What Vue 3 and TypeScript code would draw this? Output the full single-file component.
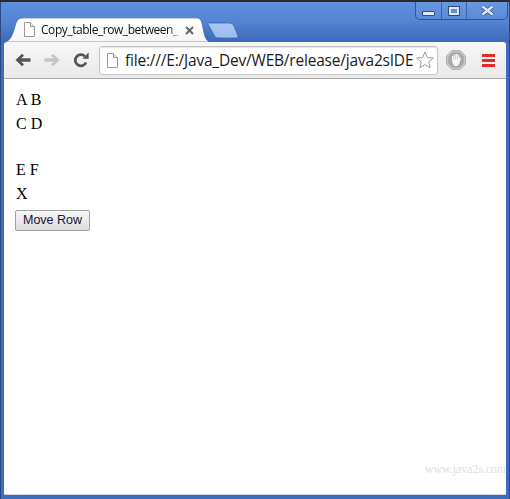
<script setup lang="ts">
const rows: string[][] = [['A B'], ['C D']]
const rows2: string[][] = [['E F'], ['X']]
</script>

<template>
  <div class="window">
    <header class="titlebar">
      <svg class="tab-shape" width="236" height="24" viewBox="0 0 236 24">
        <defs>
          <linearGradient id="tabfill" x1="0" y1="0" x2="0" y2="1">
            <stop offset="0" stop-color="#ffffff" />
            <stop offset="1" stop-color="#f6f6f6" />
          </linearGradient>
          <linearGradient id="newfill" x1="0" y1="0" x2="0" y2="1">
            <stop offset="0" stop-color="#a9c8f2" />
            <stop offset="1" stop-color="#9abcec" />
          </linearGradient>
        </defs>
        <path d="M0 24 C4 23 6 20 8 15 L11 5 C12 2 14 0 18 0 L192 0 C195 0 196 2 197 5 L199 15 C200 20 202 23 205 24 Z" fill="url(#tabfill)" stroke="#2f5ba6" stroke-width="0.6" />
        <path d="M203 6 C203 5 204 5 205 5 L224 5 C227 5 228 6 229 8 L233 18 C233 20 232 20 230 20 L213 20 C211 20 210 19 209 17 Z" fill="url(#newfill)" stroke="#3a66b0" stroke-width="0.8" />
      </svg>
      <div class="tab">
        <svg class="page-icon" width="12" height="15" viewBox="0 0 12 15">
          <path d="M1.5 .5 H7.5 L11.5 4.5 V14.5 H1.5 Z" fill="#fff" stroke="#9a9a9a" />
          <path d="M7.5 .5 V4.5 H11.5" fill="#eee" stroke="#9a9a9a" />
        </svg>
        <span class="tab-title">Copy_table_row_between_</span>
        <svg class="tab-close" width="9" height="9" viewBox="0 0 9 9">
          <path d="M1 1 L8 8 M8 1 L1 8" stroke="#666" stroke-width="2" />
        </svg>
      </div>
      <div class="controls">
        <div class="ctl ctl-min"><i class="min-glyph"></i></div>
        <div class="ctl ctl-max"><i class="max-glyph"></i></div>
        <div class="ctl ctl-close">
          <svg width="15" height="11" viewBox="0 0 15 11">
            <path d="M2.5 1.5 L12.5 9.5 M12.5 1.5 L2.5 9.5" stroke="#36588f" stroke-width="4" />
            <path d="M2.5 1.5 L12.5 9.5 M12.5 1.5 L2.5 9.5" stroke="#dfe7f5" stroke-width="2.4" />
          </svg>
        </div>
      </div>
    </header>

    <nav class="toolbar">
      <svg class="nav-icon back" width="16" height="14" viewBox="0 0 16 14">
        <path d="M.5 7 L7 .8 L9 2.8 L6.2 5.3 H15.5 V8.7 H6.2 L9 11.2 L7 13.2 Z" fill="#555" />
      </svg>
      <svg class="nav-icon fwd" width="16" height="14" viewBox="0 0 16 14">
        <path d="M15.5 7 L9 .8 L7 2.8 L9.8 5.3 H.5 V8.7 H9.8 L7 11.2 L9 13.2 Z" fill="#c4c4c4" />
      </svg>
      <svg class="nav-icon reload" width="16" height="16" viewBox="0 0 16 16">
        <path d="M13 10.5 A5.6 5.6 0 1 1 11.8 4.2" fill="none" stroke="#555" stroke-width="2.8" />
        <path d="M9.5 6.8 L15.6 6.8 L15.6 .6 Z" fill="#555" />
      </svg>
      <div class="omnibox">
        <svg class="omni-page" width="12" height="15" viewBox="0 0 12 15">
          <path d="M1.5 .5 H7.5 L11.5 4.5 V14.5 H1.5 Z" fill="#fff" stroke="#9a9a9a" />
          <path d="M7.5 .5 V4.5 H11.5" fill="#eee" stroke="#9a9a9a" />
        </svg>
        <span class="url">file:///E:/Java_Dev/WEB/release/java2sIDE</span>
        <svg class="star" width="18" height="18" viewBox="0 0 18 18">
          <path d="M9 1 L11.3 6.6 L17.3 7 L12.7 10.9 L14.2 16.8 L9 13.6 L3.8 16.8 L5.3 10.9 L.7 7 L6.7 6.6 Z" fill="#fff" stroke="#9c9c9c" />
        </svg>
      </div>
      <svg class="stop" width="20" height="20" viewBox="0 0 20 20">
        <path d="M6 .5 H14 L19.5 6 V14 L14 19.5 H6 L.5 14 V6 Z" fill="#c6c6c6" stroke="#b0b0b0" />
        <path d="M6.6 2.2 H13.4 L17.8 6.6 V13.4 L13.4 17.8 H6.6 L2.2 13.4 V6.6 Z" fill="#a9a9a9" />
        <g stroke="#f6f6f6" stroke-width="1.5" stroke-linecap="round">
          <path d="M6.7 6.5 V11" />
          <path d="M8.6 5 V10" />
          <path d="M10.5 4.6 V10" />
          <path d="M12.4 5.6 V10" />
          <path d="M14 8 L13.4 11" />
        </g>
        <path d="M6 9.5 H13.6 V12 C13.6 14.6 12 16 9.8 16 C7.8 16 6.8 14.6 6 9.5 Z" fill="#f6f6f6" />
      </svg>
      <div class="menu"><i></i><i></i><i></i></div>
    </nav>

    <main class="content">
      <table class="tbl">
        <tbody><tr v-for="r in rows" :key="r[0]"><td v-for="c in r" :key="c">{{ c }}</td></tr></tbody>
      </table>
      <table class="tbl second">
        <tbody><tr v-for="r in rows2" :key="r[0]"><td v-for="c in r" :key="c">{{ c }}</td></tr></tbody>
      </table>
      <button class="btn" type="button">Move Row</button>
      <span class="watermark">www.java2s.com</span>
    </main>
  </div>
</template>

<style scoped>
.window {
  box-sizing: border-box;
  width: 510px;
  height: 499px;
  display: flex;
  flex-direction: column;
  background: #3f6cbd;
  border-top: 2px solid #2a2a2a;
  padding: 0 4px 4px 4px;
  position: relative;
  overflow: hidden;
  box-shadow: inset 1px 0 0 #2c4a80, inset -1px 0 0 #2c4a80;
}
.titlebar {
  height: 40px;
  flex: none;
  margin: 0 -3px;
  padding: 0 3px;
  background: linear-gradient(#5e8fdb, #5585d3 45%, #3d6ab8);
  display: flex;
  align-items: flex-end;
  position: relative;
}
.tab-shape {
  position: absolute;
  left: 4px;
  bottom: 0;
}
.tab {
  position: relative;
  height: 24px;
  margin-left: 19px;
  display: flex;
  align-items: center;
}
.page-icon { flex: none; margin-bottom: 1px; }
.tab-title {
  width: 138px;
  margin-left: 6px;
  white-space: nowrap;
  font: 12px/16px "Open Sans", "Noto Sans", sans-serif;
  letter-spacing: -0.45px;
  color: #111;
  -webkit-mask-image: linear-gradient(90deg, #000 92%, rgba(0, 0, 0, 0.25));
  mask-image: linear-gradient(90deg, #000 92%, rgba(0, 0, 0, 0.25));
}
.tab-close { margin-left: 6px; }
.controls {
  position: absolute;
  top: 0;
  right: 1px;
  width: 93px;
  height: 18px;
  display: flex;
  box-sizing: border-box;
  border: 1px solid #2f5596;
  border-top: none;
  border-radius: 0 0 5px 5px;
  background: linear-gradient(#6a98df, #5a8ad6);
}
.ctl {
  display: flex;
  align-items: center;
  justify-content: center;
  border-right: 1px solid #3a62a8;
  box-sizing: border-box;
}
.ctl-min { width: 26px; }
.ctl-max { width: 25px; }
.ctl-close { flex: 1; border-right: none; }
.min-glyph {
  width: 11px;
  height: 3px;
  margin-top: 5px;
  background: #dfe7f5;
  border: 1px solid #2f4e80;
  border-radius: 1px;
}
.max-glyph {
  width: 6px;
  height: 4px;
  border: 2px solid #dfe7f5;
  outline: 1px solid #2f4e80;
}
.toolbar {
  height: 37px;
  flex: none;
  display: flex;
  align-items: center;
  box-sizing: border-box;
  padding-left: 11px;
  background: linear-gradient(#f7f7f7, #e9e9e9);
  border-bottom: 1px solid #a9a9a9;
  border-radius: 3px 3px 0 0;
}
.nav-icon { flex: none; }
.fwd { margin-left: 13px; }
.reload { margin-left: 13px; }
.omnibox {
  box-sizing: border-box;
  margin-left: 10px;
  width: 339px;
  height: 29px;
  flex: none;
  display: flex;
  align-items: center;
  background: #fff;
  border: 1px solid #c4c4c4;
  border-radius: 3px;
  padding-left: 6px;
  box-shadow: inset 0 1px 1px #e4e4e4;
}
.omni-page { flex: none; }
.url {
  margin-left: 7px;
  width: 287px;
  flex: none;
  white-space: nowrap;
  font: 15.5px/22px "Open Sans", "Noto Sans", sans-serif;
  letter-spacing: -0.2px;
  color: #1b1b1b;
}
.star { flex: none; margin-left: 4px; }
.stop { flex: none; margin-left: 8px; }
.menu {
  margin-left: 16px;
  width: 13px;
  display: flex;
  flex-direction: column;
  gap: 2px;
}
.menu i {
  display: block;
  height: 3px;
  background: #e62a2a;
}
.content {
  flex: 1;
  background: #fff;
  padding: 8px 0 0 10px;
  position: relative;
  box-shadow: inset 0 -1px 0 #c9d3e6;
}
.tbl {
  border-collapse: separate;
  border-spacing: 2px;
  font: 16px/18px "Liberation Serif", serif;
  color: #000;
}
.tbl td { padding: 2px 1px 2px 0; }
.second { margin-top: 19.5px; }
.btn {
  display: block;
  box-sizing: border-box;
  width: 75px;
  height: 21px;
  margin: 3px 0 0 1px;
  padding: 0;
  font: 12.5px/15px "Liberation Sans", Arial, sans-serif;
  color: #1a1040;
  background: linear-gradient(#f6f6f6, #dedede);
  border: 1px solid #a2a2a2;
  border-radius: 2px;
}
.watermark {
  position: absolute;
  right: 0;
  bottom: 19px;
  font: 12px/14px "Liberation Serif", serif;
  letter-spacing: -0.1px;
  color: #dedede;
  white-space: nowrap;
}
</style>
